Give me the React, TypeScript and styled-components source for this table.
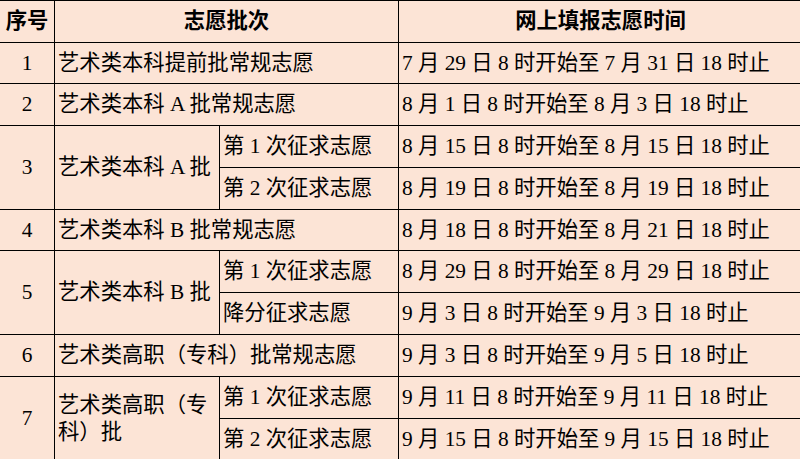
import React from "react";
import styled, { createGlobalStyle } from "styled-components";

const GlobalStyle = createGlobalStyle`
  html, body {
    margin: 0;
    padding: 0;
    background: #fce4d6;
    overflow: hidden;
  }
`;

// Black grid lines come from the 1px gaps showing the container background
const Sheet = styled.div`
  display: grid;
  grid-template-columns: 54px 164px 178px 403px;
  grid-template-rows: 41px 40px 41px 41px 41px 40px 41px 41px 41px 41px 41px;
  gap: 1px;
  padding-top: 1px;
  background: #000;
  width: 802px;
  height: 459px;
  overflow: hidden;
  font-family: "Liberation Serif", "Noto Sans CJK SC", serif;
  font-size: 21.33px;
  color: #000;
`;

const Cell = styled.div<{
  $center?: boolean;
  $head?: boolean;
  $cols?: number;
  $rows?: number;
}>`
  background: #fce4d6;
  display: flex;
  align-items: center;
  justify-content: ${(p) => (p.$center ? "center" : "flex-start")};
  padding-left: ${(p) => (p.$center ? "0" : "3px")};
  font-weight: ${(p) => (p.$head ? 700 : 400)};
  line-height: 27px;
  white-space: ${(p) => (p.$rows ? "normal" : "nowrap")};
  overflow: hidden;
  grid-column: span ${(p) => p.$cols ?? 1};
  grid-row: span ${(p) => p.$rows ?? 1};
`;

type Sub = { name: string; time: string };
type Batch = { no: string; name: string; time?: string; subs?: Sub[] };

const batches: Batch[] = [
  {
    no: "1",
    name: "艺术类本科提前批常规志愿",
    time: "7 月 29 日 8 时开始至 7 月 31 日 18 时止",
  },
  {
    no: "2",
    name: "艺术类本科 A 批常规志愿",
    time: "8 月 1 日 8 时开始至 8 月 3 日 18 时止",
  },
  {
    no: "3",
    name: "艺术类本科 A 批",
    subs: [
      { name: "第 1 次征求志愿", time: "8 月 15 日 8 时开始至 8 月 15 日 18 时止" },
      { name: "第 2 次征求志愿", time: "8 月 19 日 8 时开始至 8 月 19 日 18 时止" },
    ],
  },
  {
    no: "4",
    name: "艺术类本科 B 批常规志愿",
    time: "8 月 18 日 8 时开始至 8 月 21 日 18 时止",
  },
  {
    no: "5",
    name: "艺术类本科 B 批",
    subs: [
      { name: "第 1 次征求志愿", time: "8 月 29 日 8 时开始至 8 月 29 日 18 时止" },
      { name: "降分征求志愿", time: "9 月 3 日 8 时开始至 9 月 3 日 18 时止" },
    ],
  },
  {
    no: "6",
    name: "艺术类高职（专科）批常规志愿",
    time: "9 月 3 日 8 时开始至 9 月 5 日 18 时止",
  },
  {
    no: "7",
    name: "艺术类高职（专科）批",
    subs: [
      { name: "第 1 次征求志愿", time: "9 月 11 日 8 时开始至 9 月 11 日 18 时止" },
      { name: "第 2 次征求志愿", time: "9 月 15 日 8 时开始至 9 月 15 日 18 时止" },
    ],
  },
];

function BatchRows({ batch }: { batch: Batch }) {
  if (!batch.subs) {
    return (
      <>
        <Cell $center>{batch.no}</Cell>
        <Cell $cols={2}>{batch.name}</Cell>
        <Cell>{batch.time}</Cell>
      </>
    );
  }
  const span = batch.subs.length;
  return (
    <>
      <Cell $center $rows={span}>
        {batch.no}
      </Cell>
      <Cell $rows={span}>{batch.name}</Cell>
      {batch.subs.map((s) => (
        <React.Fragment key={s.name + s.time}>
          <Cell>{s.name}</Cell>
          <Cell>{s.time}</Cell>
        </React.Fragment>
      ))}
    </>
  );
}

export default function App() {
  return (
    <>
      <GlobalStyle />
      <Sheet>
        <Cell $center $head>
          序号
        </Cell>
        <Cell $center $head $cols={2}>
          志愿批次
        </Cell>
        <Cell $center $head>
          网上填报志愿时间
        </Cell>
        {batches.map((b) => (
          <BatchRows key={b.no} batch={b} />
        ))}
      </Sheet>
    </>
  );
}
